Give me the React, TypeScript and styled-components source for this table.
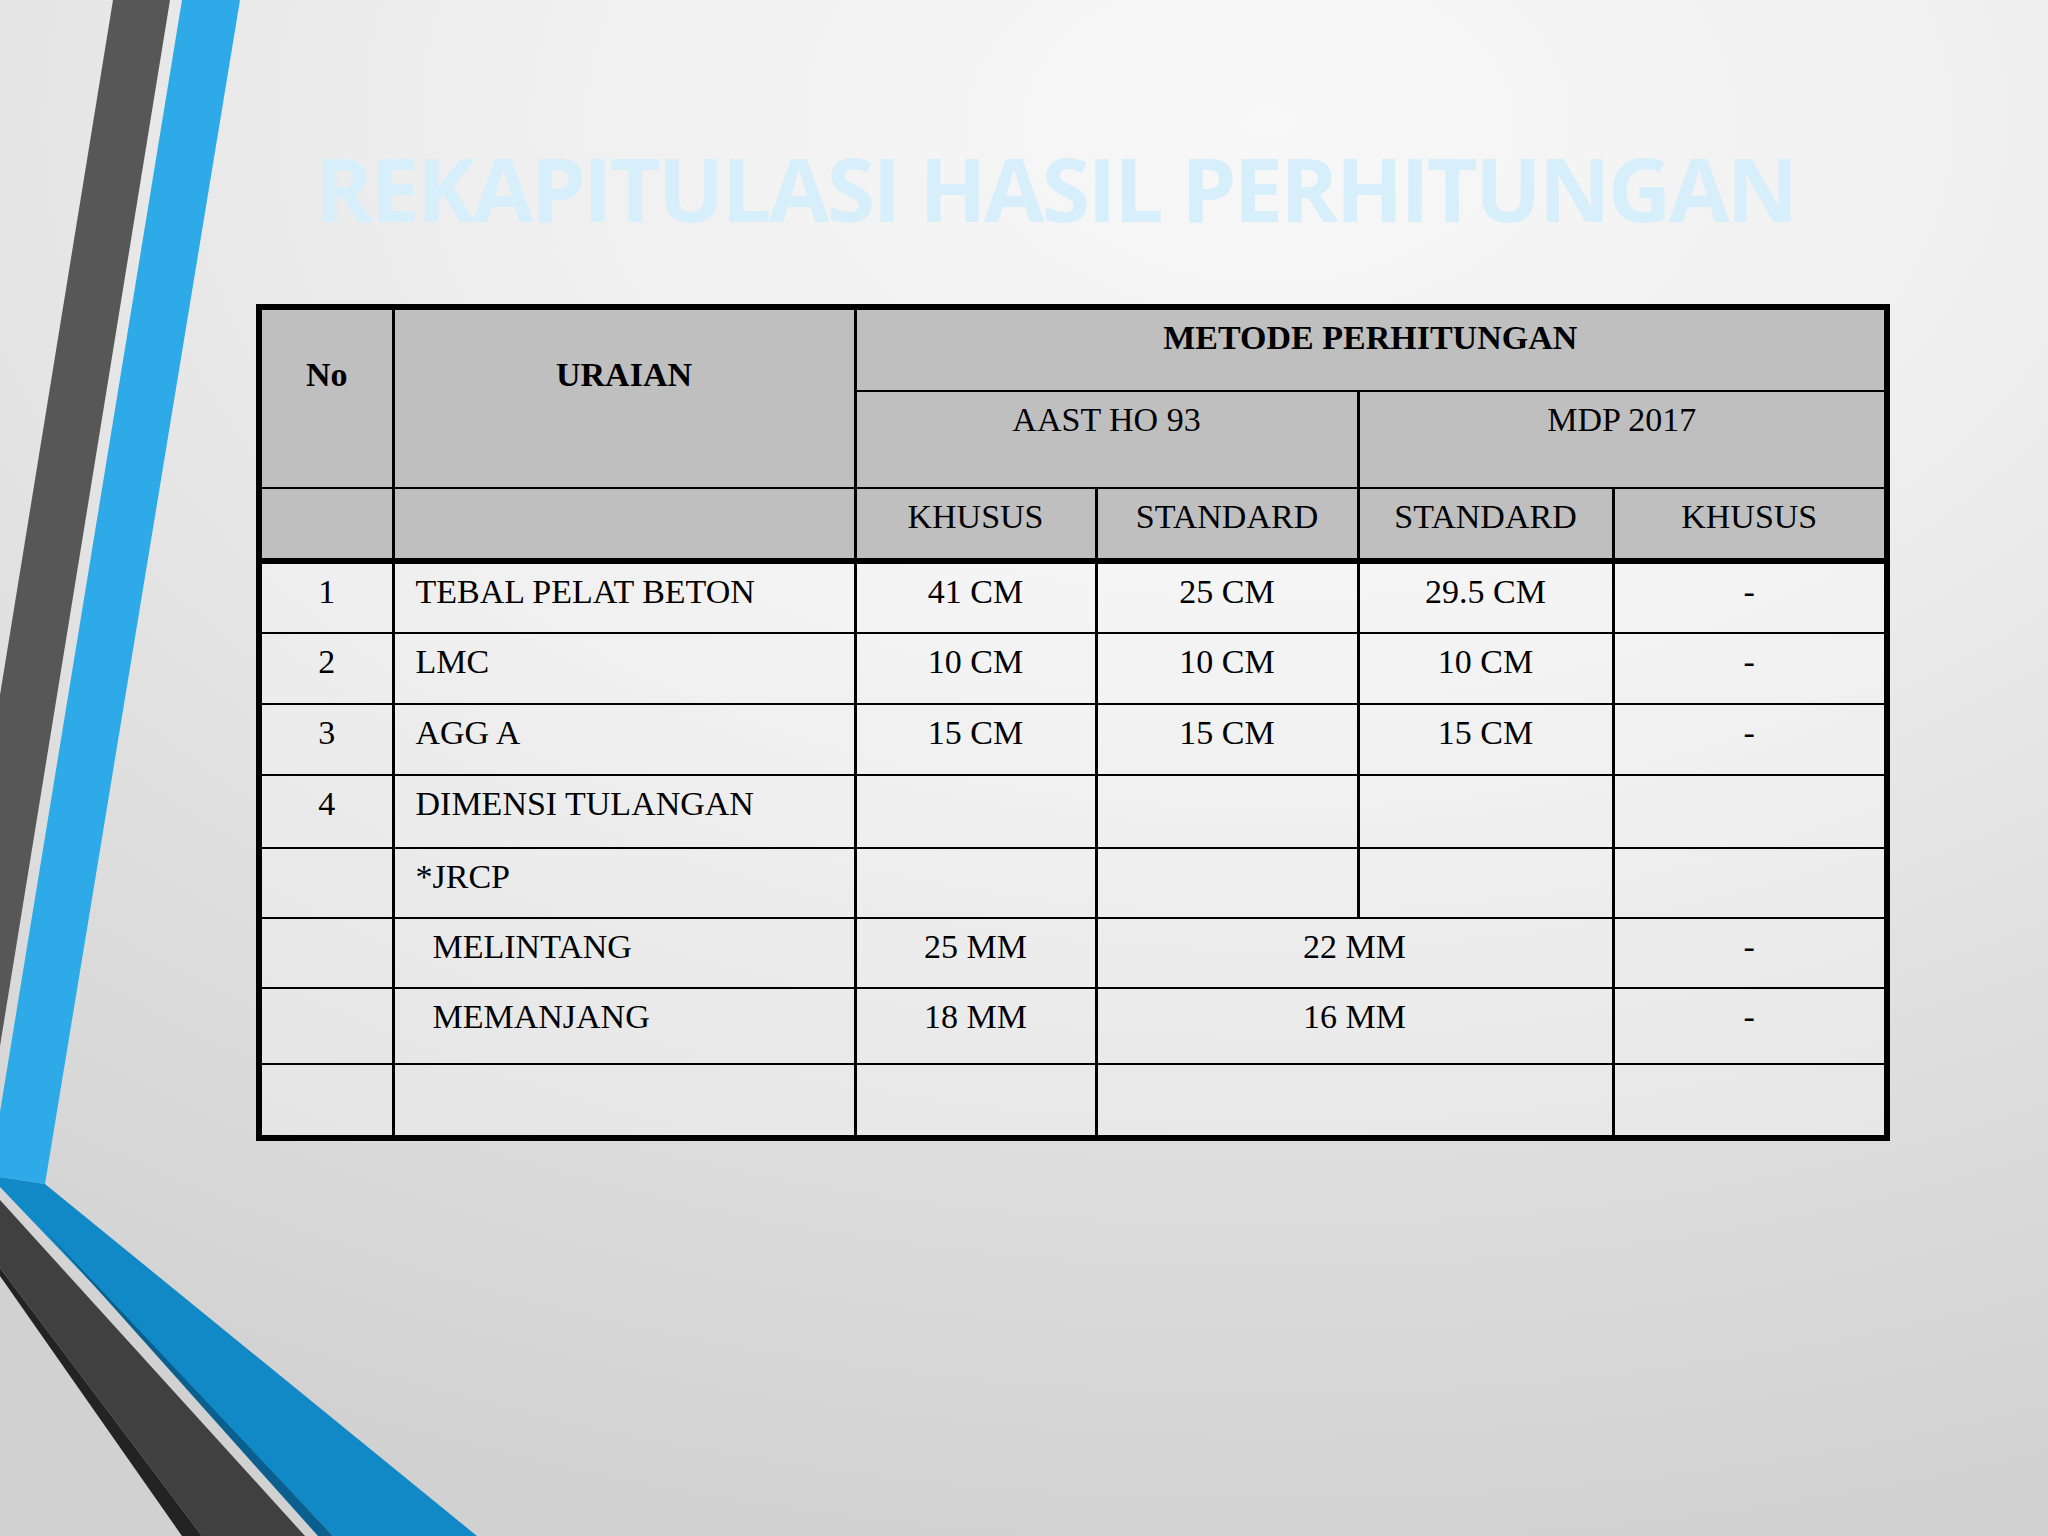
import React from 'react';
import styled, { createGlobalStyle } from 'styled-components';

const GlobalStyle = createGlobalStyle`
  html, body {
    margin: 0;
    padding: 0;
  }
  body {
    width: 2048px;
    height: 1536px;
    overflow: hidden;
    font-family: 'Liberation Serif', 'Times New Roman', serif;
  }
`;

const Slide = styled.div`
  position: relative;
  box-sizing: border-box;
  width: 2048px;
  height: 1536px;
  overflow: hidden;
  padding-top: 144px;
  background: radial-gradient(
    ellipse 110% 95% at 62% 8%,
    #f8f8f8 0%,
    #efefef 35%,
    #dedede 70%,
    #d1d1d1 100%
  );
`;

const Decor = styled.svg`
  position: absolute;
  left: 0;
  top: 0;
  width: 2048px;
  height: 1536px;
  pointer-events: none;
`;

const Content = styled.div`
  position: relative;
`;

const Title = styled.h1`
  margin: 0 0 0 315px;
  font-family: 'Open Sans', 'Noto Sans', sans-serif;
  font-weight: 700;
  font-size: 88px;
  line-height: 88px;
  letter-spacing: -2.7px;
  color: #d7eefb;
  white-space: nowrap;
`;

const Table = styled.table`
  margin: 72px 0 0 256px;
  width: 1634px;
  table-layout: fixed;
  border-collapse: collapse;
  border: 6px solid #000;
  font-family: 'Liberation Serif', 'Times New Roman', serif;
  font-size: 34px;
  line-height: 1.15;
  color: #000;
`;

const Row = styled.tr<{ $h: number }>`
  height: ${(p) => p.$h}px;
`;

const Cell = styled.td<{
  $head?: boolean;
  $bold?: boolean;
  $left?: boolean;
  $pt?: number;
  $indent?: number;
  $thick?: boolean;
}>`
  box-sizing: border-box;
  padding: ${(p) => p.$pt ?? 8}px 4px 0 ${(p) => (p.$left ? 21 + (p.$indent ?? 0) : 4)}px;
  vertical-align: top;
  text-align: ${(p) => (p.$left ? 'left' : 'center')};
  font-weight: ${(p) => (p.$bold ? 700 : 400)};
  white-space: nowrap;
  background: ${(p) => (p.$head ? '#bfbfbf' : 'rgba(255, 255, 255, 0.32)')};
  border-left: 3px solid #000;
  border-right: 3px solid #000;
  border-top: 2px solid #000;
  border-bottom: ${(p) => (p.$thick ? 6 : 2)}px solid #000;
`;

const colWidths = [134, 462, 241, 262, 255, 274];

type Body = {
  h: number;
  no: string;
  label: string;
  indent?: number;
  khusus: string;
  aast?: string;
  mdp?: string;
  merged?: string;
  last: string;
};

const bodyRows: Body[] = [
  { h: 72, no: '1', label: 'TEBAL PELAT BETON', khusus: '41 CM', aast: '25 CM', mdp: '29.5 CM', last: '-' },
  { h: 71, no: '2', label: 'LMC', khusus: '10 CM', aast: '10 CM', mdp: '10 CM', last: '-' },
  { h: 71, no: '3', label: 'AGG A', khusus: '15 CM', aast: '15 CM', mdp: '15 CM', last: '-' },
  { h: 73, no: '4', label: 'DIMENSI TULANGAN', khusus: '', aast: '', mdp: '', last: '' },
  { h: 70, no: '', label: '*JRCP', khusus: '', aast: '', mdp: '', last: '' },
  { h: 70, no: '', label: 'MELINTANG', indent: 17, khusus: '25 MM', merged: '22 MM', last: '-' },
  { h: 76, no: '', label: 'MEMANJANG', indent: 17, khusus: '18 MM', merged: '16 MM', last: '-' },
  { h: 74, no: '', label: '', khusus: '', merged: '', last: '' },
];

const Decoration = () => (
  <Decor viewBox="0 0 2048 1536">
    <polygon points="113,0 170,0 0,1046 0,695" fill="#575757" />
    <polygon points="182,0 240,0 45,1184 0,1177 0,1112" fill="#2eaae8" />
    <polygon points="0,1177 45,1184 477,1536 333,1536 0,1187" fill="#1289c7" />
    <polygon points="40,1225 333,1536 318,1536" fill="#0a5f8e" />
    <polygon points="0,1200 305,1536 202,1536 0,1268" fill="#404040" />
    <polygon points="0,1268 202,1536 182,1536 0,1276" fill="#232323" />
  </Decor>
);

export default function App() {
  return (
    <>
      <GlobalStyle />
      <Slide>
        <Decoration />
        <Content>
          <Title>REKAPITULASI HASIL PERHITUNGAN</Title>
          <Table>
            <colgroup>
              {colWidths.map((w, i) => (
                <col key={i} style={{ width: w }} />
              ))}
            </colgroup>
            <thead>
              <Row $h={84}>
                <Cell as="th" $head $bold rowSpan={2} $pt={45}>
                  No
                </Cell>
                <Cell as="th" $head $bold rowSpan={2} $pt={45}>
                  URAIAN
                </Cell>
                <Cell as="th" $head $bold colSpan={4}>
                  METODE PERHITUNGAN
                </Cell>
              </Row>
              <Row $h={97}>
                <Cell as="th" $head colSpan={2}>
                  AAST HO 93
                </Cell>
                <Cell as="th" $head colSpan={2}>
                  MDP 2017
                </Cell>
              </Row>
              <Row $h={73}>
                <Cell as="th" $head $thick />
                <Cell as="th" $head $thick />
                <Cell as="th" $head $thick>
                  KHUSUS
                </Cell>
                <Cell as="th" $head $thick>
                  STANDARD
                </Cell>
                <Cell as="th" $head $thick>
                  STANDARD
                </Cell>
                <Cell as="th" $head $thick>
                  KHUSUS
                </Cell>
              </Row>
            </thead>
            <tbody>
              {bodyRows.map((r, i) => (
                <Row key={i} $h={r.h}>
                  <Cell>{r.no}</Cell>
                  <Cell $left $indent={r.indent}>
                    {r.label}
                  </Cell>
                  <Cell>{r.khusus}</Cell>
                  {r.merged !== undefined ? (
                    <Cell colSpan={2}>{r.merged}</Cell>
                  ) : (
                    <>
                      <Cell>{r.aast}</Cell>
                      <Cell>{r.mdp}</Cell>
                    </>
                  )}
                  <Cell>{r.last}</Cell>
                </Row>
              ))}
            </tbody>
          </Table>
        </Content>
      </Slide>
    </>
  );
}
